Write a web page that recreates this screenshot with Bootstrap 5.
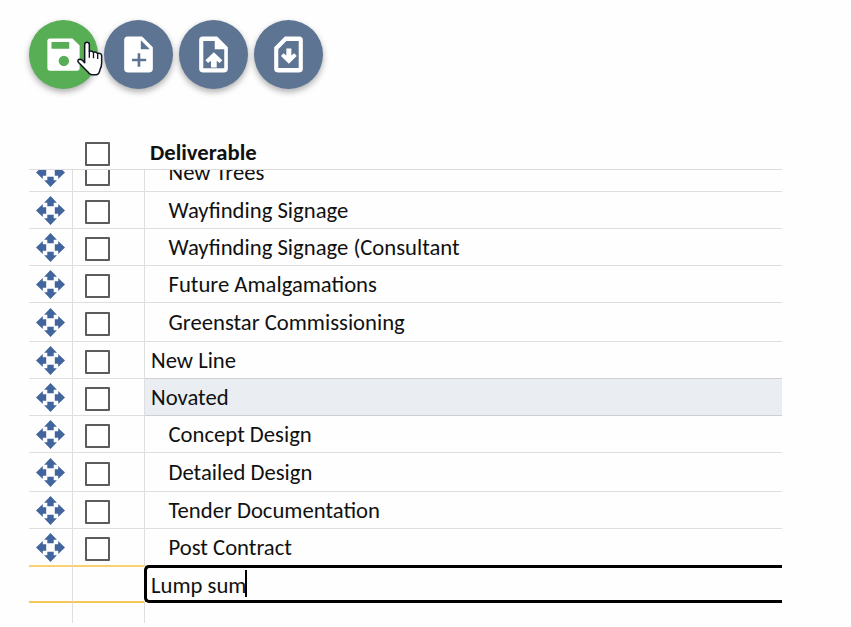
<!DOCTYPE html>
<html lang="en">
<head>
<meta charset="utf-8">
<meta name="viewport" content="width=device-width, initial-scale=1">
<title>Deliverables</title>
<link href="https://cdn.jsdelivr.net/npm/bootstrap@5.3.0/dist/css/bootstrap.min.css" rel="stylesheet">
<style>
  body { font-family: Carlito, Lato, sans-serif; font-size: 22.68px; line-height: 36px; color: #111; background: #fefefe; height: 627px; overflow: hidden; }
  .toolbar { padding: 20px 0 0 29px; gap: 6px; }
  .fab { width: 69px; height: 69px; background: #5e7493; border: 0; box-shadow: 0 3px 6px rgba(0,0,0,.32); }
  .fab-save { background: #57ae55; }
  .fab svg { width: 43px; height: 43px; display: block; }
  .pointer { left: 76px; top: 40px; width: 28px; height: 37px; }
  .sheet { width: 753px; margin: 46px 0 0 29px; }
  .sheet-head { height: 35px; border-bottom: 1px solid #dcdcdc; }
  .sheet-head .cell-name { font-weight: 700; line-height: 35px; border: 0; padding-left: 5px; }
  .sheet-head .cell-move, .sheet-head .cell-check { border-color: transparent; }
  .sheet-head .box { margin-top: 7px; }
  .line { height: 37px; }
  .line > div { border-bottom: 1px solid #dedede; }
  .tall { height: 39px; }
  .tall > div { padding-top: 1px; }
  .cut { height: 22px; overflow: hidden; align-items: flex-end !important; }
  .cut > div { height: 38px !important; flex-shrink: 0; }
  .cell-move { width: 44px; border-right: 1px solid #dedede; }
  .cell-check { width: 72px; border-right: 1px solid #dedede; padding-left: 12px; }
  .cell-name { padding-left: 6px; white-space: nowrap; }
  .child .cell-name { padding-left: 23.5px; }
  .cell-move svg { width: 29px; height: 29px; fill: #41659c; margin: 4px 0 0 7px; display: block; }
  .box { width: 25px; height: 24px; border: 2px solid #5c5c5c; border-radius: 1px; margin-top: 8px; background: #fff; }
  .group .cell-name { background: #eaeef2; border-color: #ccd0d3; box-shadow: 0 -1px #ccd0d3; }
  .edit { height: 38px; margin-top: -1px; }
  .edit .cell-move, .edit .cell-check { border-top: 2px solid #fbd070; border-bottom: 2px solid #f6c658; }
  .edit .cell-check { border-right-color: transparent; }
  .editor { border: 3px solid #000; border-right: 0; border-radius: 5px 0 0 5px; margin-left: -1px; padding-left: 4px; line-height: 34px; }
  .caret { width: 1.5px; height: 27px; background: #000; margin: 2px 0 0 -1px; }
  .tail { height: 20px; }
</style>
</head>
<body>
<svg class="d-none">
  <symbol id="move" viewBox="0 0 29 29"><path d="M14.500 0l6.400 6.800h-3.200v3.400h-6.400V6.800H8.100zM14.500 29l-6.400-6.800h3.200v-3.400h6.400v3.400h3.200zM0 14.500l6.800-6.400v3.200h3.400v6.400H6.800v3.200zM29 14.500l-6.800 6.400v-3.200h-3.400v-6.400h3.400V8.100z"/></symbol>
</svg>
<div class="toolbar d-flex position-relative">
  <button class="fab fab-save btn rounded-circle p-0 d-flex align-items-center justify-content-center" aria-label="Save">
    <svg viewBox="0 0 24 24" fill="#fff" fill-rule="evenodd"><path d="M17 3H4.500A1.500 1.500 0 0 0 3 4.500v15A1.500 1.500 0 0 0 4.500 21h15a1.500 1.500 0 0 0 1.500-1.500V7zM12.200 18.500a2.900 2.900 0 1 1 0-5.800 2.900 2.900 0 0 1 0 5.800zM15.200 8.800H5.300V5h9.900z"/></svg>
  </button>
  <button class="fab btn rounded-circle p-0 d-flex align-items-center justify-content-center" aria-label="Add">
    <svg viewBox="0 0 24 24" fill="#fff" fill-rule="evenodd"><path d="M14 2H6a2 2 0 0 0-2 2v16a2 2 0 0 0 2 2h12a2 2 0 0 0 2-2V8zM13.300 4L18.300 9h-5zM11.500 11.300H13v3.100h3.300v1.400H13v3.100h-1.500v-3.100H8.400v-1.400h3.100z"/></svg>
  </button>
  <button class="fab btn rounded-circle p-0 d-flex align-items-center justify-content-center" aria-label="Upload">
    <svg viewBox="0 0 24 24" fill="#fff" fill-rule="evenodd"><path d="M14 2H6a2 2 0 0 0-2 2v16a2 2 0 0 0 2 2h12a2 2 0 0 0 2-2V8zM6.300 4.400h6.400V9H18v10.700H6.300z"/><path d="M12.200 10.700l4.700 4.500-1.500 1.600-1.600-1.300v3.800h-3.200v-3.800l-1.600 1.300-1.500-1.600z"/></svg>
  </button>
  <button class="fab btn rounded-circle p-0 d-flex align-items-center justify-content-center" aria-label="Download">
    <svg viewBox="0 0 24 24" fill="#fff" fill-rule="evenodd"><path d="M10 2h8a2 2 0 0 1 2 2v16a2 2 0 0 1-2 2H6a2 2 0 0 1-2-2V8zM10.800 4.400L6.300 9v10.600H17.700V4.400z"/><path d="M12.200 17.100l4.400-4.300-1.400-1.500-1.600 1.300V8.700h-2.800v3.900l-1.600-1.300-1.400 1.500z"/></svg>
  </button>
  <svg class="pointer position-absolute" viewBox="168 90 84 111"><path d="M194 158V104q0-7 7-7t7 7v20q7-3 12 3 8-3 12 3 12-2 13 7v23q0 10-5 19-2 14-11 15h-14q-8-1-12-9l-28-28q-4-9 5-9 6 0 14 10z" fill="#fff" stroke="#111420" stroke-width="4.500" stroke-linejoin="round"/><path d="M208 122v21M220.500 128v17M233 131v16" stroke="#111420" stroke-width="4" fill="none"/></svg>
</div>

<main class="sheet">
  <div class="sheet-head d-flex"><div class="cell-move"></div><div class="cell-check"><div class="box"></div></div><div class="cell-name"><span>Deliverable</span></div></div>
  <div class="line cut child d-flex"><div class="cell-move"><svg><use href="#move"/></svg></div><div class="cell-check"><div class="box"></div></div><div class="cell-name flex-grow-1"><span>New Trees</span></div></div>
  <div class="line child d-flex"><div class="cell-move"><svg><use href="#move"/></svg></div><div class="cell-check"><div class="box"></div></div><div class="cell-name flex-grow-1"><span>Wayfinding Signage</span></div></div>
  <div class="line child d-flex"><div class="cell-move"><svg><use href="#move"/></svg></div><div class="cell-check"><div class="box"></div></div><div class="cell-name flex-grow-1"><span>Wayfinding Signage (Consultant</span></div></div>
  <div class="line child d-flex"><div class="cell-move"><svg><use href="#move"/></svg></div><div class="cell-check"><div class="box"></div></div><div class="cell-name flex-grow-1"><span>Future Amalgamations</span></div></div>
  <div class="line tall child d-flex"><div class="cell-move"><svg><use href="#move"/></svg></div><div class="cell-check"><div class="box"></div></div><div class="cell-name flex-grow-1"><span>Greenstar Commissioning</span></div></div>
  <div class="line d-flex"><div class="cell-move"><svg><use href="#move"/></svg></div><div class="cell-check"><div class="box"></div></div><div class="cell-name flex-grow-1"><span>New Line</span></div></div>
  <div class="line group d-flex"><div class="cell-move"><svg><use href="#move"/></svg></div><div class="cell-check"><div class="box"></div></div><div class="cell-name flex-grow-1"><span>Novated</span></div></div>
  <div class="line child d-flex"><div class="cell-move"><svg><use href="#move"/></svg></div><div class="cell-check"><div class="box"></div></div><div class="cell-name flex-grow-1"><span>Concept Design</span></div></div>
  <div class="line tall child d-flex"><div class="cell-move"><svg><use href="#move"/></svg></div><div class="cell-check"><div class="box"></div></div><div class="cell-name flex-grow-1"><span>Detailed Design</span></div></div>
  <div class="line child d-flex"><div class="cell-move"><svg><use href="#move"/></svg></div><div class="cell-check"><div class="box"></div></div><div class="cell-name flex-grow-1"><span>Tender Documentation</span></div></div>
  <div class="line child d-flex"><div class="cell-move"><svg><use href="#move"/></svg></div><div class="cell-check"><div class="box"></div></div><div class="cell-name flex-grow-1"><span>Post Contract</span></div></div>
  <div class="edit d-flex"><div class="cell-move"></div><div class="cell-check"></div><div class="editor flex-grow-1 d-flex"><span>Lump sum</span><div class="caret"></div></div></div>
  <div class="tail d-flex"><div class="cell-move"></div><div class="cell-check"></div></div>
</main>
<script src="https://cdn.jsdelivr.net/npm/bootstrap@5.3.0/dist/js/bootstrap.bundle.min.js"></script>
</body>
</html>
